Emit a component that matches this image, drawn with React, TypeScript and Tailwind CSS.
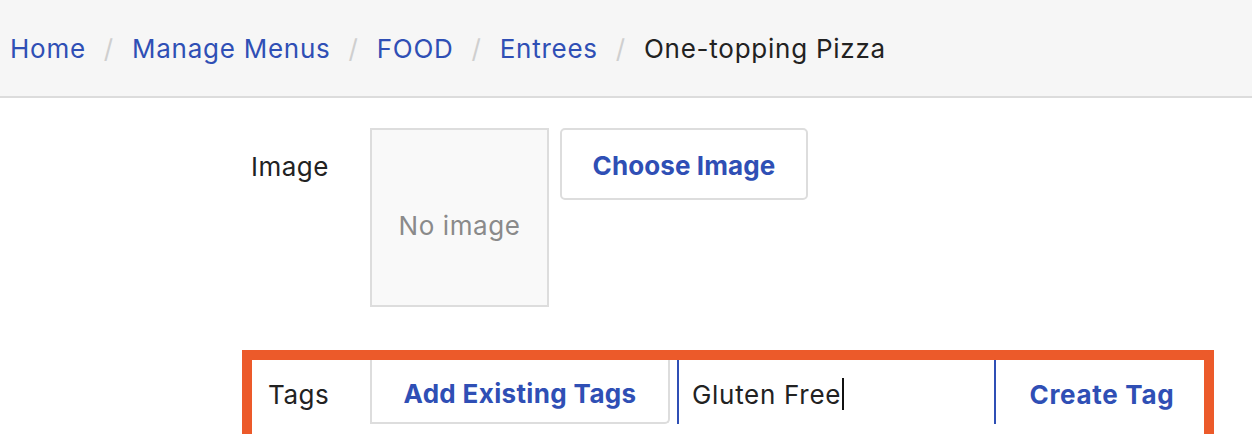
import React from "react";

const Sep = () => <span className="text-[#cfcfcf] mx-[18px]">/</span>;

export default function App() {
  return (
    <div className="w-[1252px] h-[434px] overflow-hidden bg-white text-[#222] font-['Inter','Noto_Sans',sans-serif]">
      <div className="h-[98px] bg-[#f6f6f6] border-b-2 border-[#dcdcdc] flex items-center pl-[10px] text-[26px] tracking-[0.75px]">
        <a className="text-[#2f4fb5]">Home</a>
        <Sep />
        <a className="text-[#2f4fb5]">Manage Menus</a>
        <Sep />
        <a className="text-[#2f4fb5]">FOOD</a>
        <Sep />
        <a className="text-[#2f4fb5]">Entrees</a>
        <Sep />
        <span className="text-[#222]">One-topping Pizza</span>
      </div>

      <div className="pt-[30px] pl-[251px] flex">
        <div className="w-[119px] text-[26px] tracking-[0.5px] pt-[23px] leading-[32px]">Image</div>
        <div className="w-[179px] h-[179px] bg-[#f9f9f9] border-2 border-[#dddddd] flex items-center justify-center pt-[16px] text-[26px] tracking-[0.6px] text-[#8a8a8a]">
          No image
        </div>
        <button className="ml-[11px] w-[248px] h-[72px] pt-[2px] border-2 border-[#dddddd] rounded-[5px] bg-white text-[26px] tracking-[0.1px] font-bold text-[#2f4fb5]">
          Choose Image
        </button>
      </div>

      <div className="mt-[43px] ml-[242px] w-[972px] border-[10px] border-[#ec5a2a] h-[94px]">
        <div className="flex h-[64px] bg-white text-[26px]">
          <div className="w-[118px] flex items-center pl-[16px] pt-[4px] text-[#222] tracking-[0.5px]">Tags</div>
          <button className="w-[300px] pt-[4px] border-l-2 border-r-2 border-b-2 border-[#dddddd] rounded-br-[5px] font-bold tracking-[0.35px] text-[#2f4fb5]">
            Add Existing Tags
          </button>
          <div className="ml-[7px] w-[319px] pt-[4px] border-l-2 border-r-2 border-[#2f4fb5] flex items-center pl-[13px] text-[#222] tracking-[0.7px]">
            Gluten Free<span className="inline-block w-[2px] h-[32px] bg-[#111] ml-[1px]" />
          </div>
          <button className="flex-1 pt-[4px] pl-[4px] font-bold tracking-[0.7px] text-[#2f4fb5]">Create Tag</button>
        </div>
      </div>
    </div>
  );
}
